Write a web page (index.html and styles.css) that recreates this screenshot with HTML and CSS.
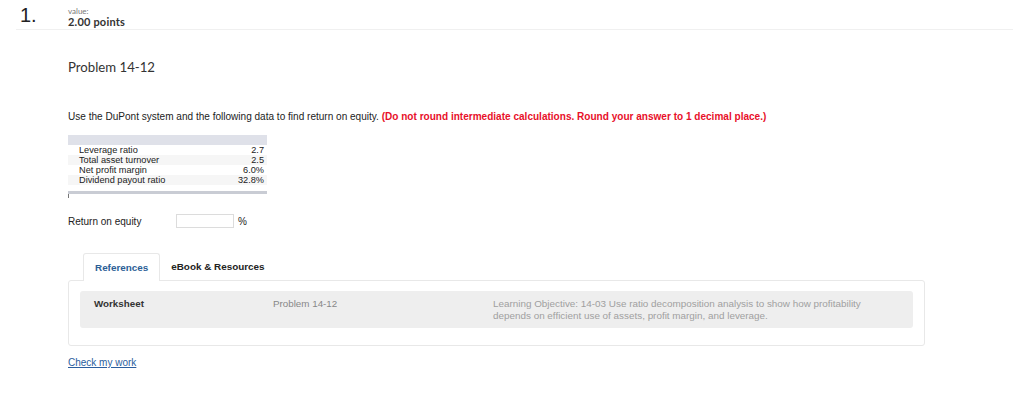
FILE: index.html
```html
<!DOCTYPE html>
<html>
<head>
<meta charset="utf-8">
<link rel="stylesheet" href="styles.css">
</head>
<body>
<div class="qhead">
  <div class="qnum">1.</div>
  <div class="qmeta">
    <div class="qvalue">value:</div>
    <div class="qpoints">2.00 points</div>
  </div>
</div>
<div class="content">
  <h2 class="ptitle">Problem 14-12</h2>
  <p class="instr">Use the DuPont system and the following data to find return on equity. <span class="warn">(Do not round intermediate calculations. Round your answer to 1 decimal place.)</span></p>

  <div class="dtable">
    <div class="dhead"></div>
    <div class="drow"><span>Leverage ratio</span><span>2.7</span></div>
    <div class="drow alt"><span>Total asset turnover</span><span>2.5</span></div>
    <div class="drow"><span>Net profit margin</span><span>6.0%</span></div>
    <div class="drow alt"><span>Dividend payout ratio</span><span>32.8%</span></div>
    <div class="dfoot"></div>
    <div class="dtick"></div>
  </div>

  <div class="answer">
    <span class="alabel">Return on equity</span>
    <span class="abox"></span>
    <span class="apct">%</span>
  </div>

  <div class="tabs">
    <div class="tab active">References</div>
    <div class="tab">eBook &amp; Resources</div>
  </div>
  <div class="panel">
    <div class="refrow">
      <div class="rc rname">Worksheet</div>
      <div class="rc rprob">Problem 14-12</div>
      <div class="rc rlo">Learning Objective: 14-03 Use ratio decomposition analysis to show how profitability depends on efficient use of assets, profit margin, and leverage.</div>
    </div>
  </div>

  <a class="check" href="#">Check my work</a>
</div>
</body>
</html>
```

FILE: styles.css
```css
html, body {
  margin: 0;
  padding: 0;
  background: #fff;
}
body {
  font-family: "Liberation Sans", Arial, sans-serif;
  color: #222;
  width: 1024px;
  height: 405px;
  overflow: hidden;
}
.qhead {
  display: flex;
  margin: 0 11px 0 16px;
  padding-left: 4px;
  height: 30px;
  border-bottom: 1px solid #f0f0f0;
  box-sizing: border-box;
}
.qnum {
  width: 48px;
  font-size: 20px;
  line-height: 20px;
  padding-top: 5px;
  color: #222;
}
.qmeta {
  padding-top: 7px;
  font-family: Lato, "Liberation Sans", sans-serif;
}
.qvalue {
  font-size: 8px;
  line-height: 9px;
  color: #777;
}
.qpoints {
  font-size: 11px;
  line-height: 12px;
  font-weight: 700;
  color: #333;
  letter-spacing: 0.2px;
}
.content {
  padding-left: 68px;
}
.ptitle {
  margin: 29px 0 0 0;
  font-family: Lato, "Liberation Sans", sans-serif;
  font-weight: 400;
  font-size: 13.2px;
  line-height: 16px;
  color: #333;
}
.instr {
  margin: 36px 0 0 0;
  font-size: 10.05px;
  line-height: 12px;
  color: #222;
}
.warn {
  color: #e8102a;
  font-weight: 700;
}
.dtable {
  margin-top: 12px;
  width: 199px;
  font-size: 9.2px;
  color: #222;
}
.dhead {
  height: 10px;
  background: #dfe1e9;
}
.drow {
  display: flex;
  justify-content: space-between;
  height: 10px;
  line-height: 10px;
  padding: 0 3px 0 11px;
}
.drow.alt {
  background: #f6f6f6;
}
.dfoot {
  margin-top: 6px;
  height: 3px;
  background: #c9ccd4;
}
.dtick {
  width: 1px;
  height: 4px;
  background: #777;
}
.answer {
  display: flex;
  align-items: center;
  margin-top: 16px;
  font-size: 10px;
  color: #222;
}
.alabel {
  width: 108px;
}
.abox {
  width: 56px;
  height: 12px;
  border: 1px solid #dcdcdc;
}
.apct {
  margin-left: 4px;
}
.tabs {
  display: flex;
  margin-top: 25px;
  padding-left: 15px;
  font-size: 9.9px;
  font-weight: 700;
}
.tab {
  height: 26px;
  line-height: 27px;
  padding: 0 11px;
  color: #222;
}
.tab.active {
  border: 1px solid #e8e8e8;
  border-bottom: none;
  border-radius: 3px 3px 0 0;
  color: #2c5e96;
  background: #fff;
  position: relative;
  z-index: 1;
  height: 27px;
}
.panel {
  width: 833px;
  margin-top: -1px;
  border: 1px solid #e8e8e8;
  border-radius: 3px;
  padding: 10px 11px 17px 11px;
}
.refrow {
  display: grid;
  grid-template-columns: 179px 220px 1fr;
  background: #eeeeee;
  border-radius: 3px;
  padding: 7px 14px 8px 14px;
  height: 22px;
  font-size: 9.8px;
  line-height: 11.5px;
}
.rname {
  font-weight: 700;
  color: #333;
}
.rprob {
  color: #888;
}
.rlo {
  color: #a0a0a0;
  font-size: 9.9px;
  max-width: 385px;
}
.check {
  display: inline-block;
  margin-top: 11px;
  font-size: 10px;
  color: #2b5e9e;
  text-decoration: underline;
}
```
